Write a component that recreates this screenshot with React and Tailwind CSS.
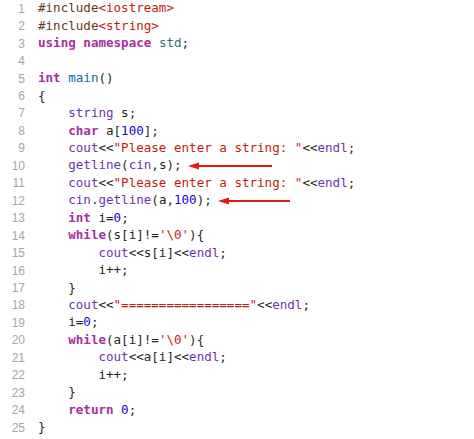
const KW = 'text-[#a5309f] font-bold';
const PRE = 'text-[#643820]';
const STR = 'text-[#c41a16]';
const NUM = 'text-[#1c00cf]';
const LIB = 'text-[#6c36a9]';
const DECL = 'text-[#0f68a0]';
const STD = 'text-[#326d74]';

const Arrow = ({ width }) => (
  <svg width={width} height="8" viewBox={`0 0 ${width} 8`} className="inline-block align-middle ml-[6px]">
    <polygon points="0,4 11,0.5 11,7.5" fill="#e3191c" />
    <rect x="9" y="3" width={width - 9} height="2" fill="#e3191c" />
  </svg>
);

// each line: array of [text, className]
const lines = [
  [['#include', PRE], ['<iostream>', STR]],
  [['#include', PRE], ['<string>', STR]],
  [['using', KW], [' '], ['namespace', KW], [' '], ['std', STD], [';']],
  [],
  [['int', KW], [' '], ['main', DECL], ['()']],
  [['{']],
  [['    '], ['string', LIB], [' s;']],
  [['    '], ['char', KW], [' a['], ['100', NUM], ['];']],
  [['    '], ['cout', LIB], ['<<'], ['"Please enter a string: "', STR], ['<<'], ['endl', LIB], [';']],
  [['    '], ['getline', LIB], ['('], ['cin', LIB], [',s);'], ['ARROW84']],
  [['    '], ['cout', LIB], ['<<'], ['"Please enter a string: "', STR], ['<<'], ['endl', LIB], [';']],
  [['    '], ['cin', LIB], ['.'], ['getline', LIB], ['(a,'], ['100', NUM], [');'], ['ARROW72']],
  [['    '], ['int', KW], [' i='], ['0', NUM], [';']],
  [['    '], ['while', KW], ['(s[i]!='], ["'\\0'", STR], ['){']],
  [['        '], ['cout', LIB], ['<<s[i]<<'], ['endl', LIB], [';']],
  [['        i++;']],
  [['    }']],
  [['    '], ['cout', LIB], ['<<'], ['"================="', STR], ['<<'], ['endl', LIB], [';']],
  [['    i='], ['0', NUM], [';']],
  [['    '], ['while', KW], ['(a[i]!='], ["'\\0'", STR], ['){']],
  [['        '], ['cout', LIB], ['<<a[i]<<'], ['endl', LIB], [';']],
  [['        i++;']],
  [['    }']],
  [['    '], ['return', KW], [' '], ['0', NUM], [';']],
  [['}']],
];

export default function App() {
  return (
    <div className="w-[474px] h-[439px] bg-white overflow-hidden">
      <div className="flex flex-col">
        {lines.map((tokens, i) => (
          <div key={i} className="flex items-center h-[17.46px]">
            <div className="w-[25px] text-right text-[12px] text-[#a6a6a6] font-['Liberation_Sans',sans-serif]">
              {i + 1}
            </div>
            <div className="ml-[13px] whitespace-pre text-[12.55px] text-[#1f1f24] font-['DejaVu_Sans_Mono',monospace] flex items-center">
              {tokens.map(([t, c], j) => {
                if (t === 'ARROW84') return <Arrow key={j} width={84} />;
                if (t === 'ARROW72') return <Arrow key={j} width={72} />;
                return (
                  <span key={j} className={c}>
                    {t}
                  </span>
                );
              })}
            </div>
          </div>
        ))}
      </div>
    </div>
  );
}
